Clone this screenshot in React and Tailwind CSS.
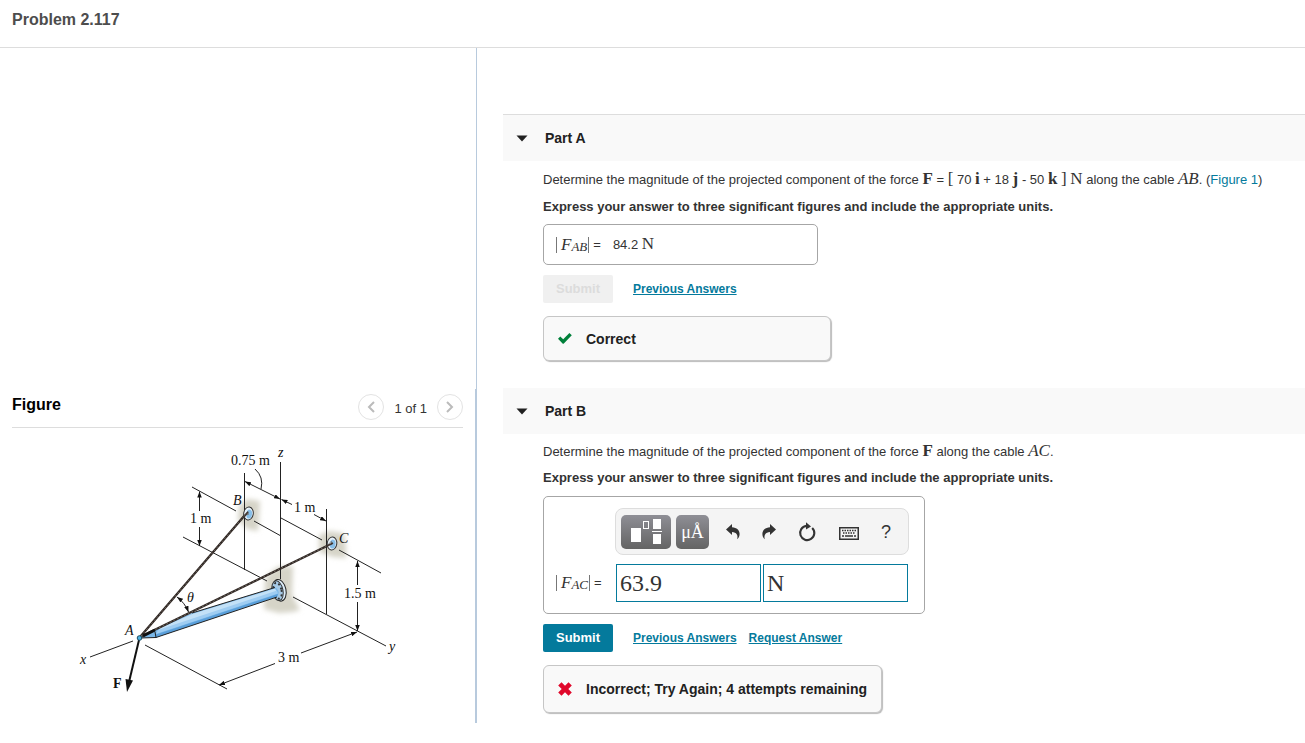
import React, { useState } from 'react';

const CaretIcon = () => (
  <svg width="12" height="7" viewBox="0 0 12 7" aria-hidden="true">
    <path d="M0.5 0.5h11L6 6.5z" fill="#212121" />
  </svg>
);

const CheckIcon = () => (
  <svg width="14" height="11" viewBox="0 0 14 11" aria-hidden="true">
    <path d="M0 5.8 2.3 3.500 5.200 6.300 11.400 0 13.800 2.200 5.600 10.800 4.800 10.800z" fill="#00803a" />
  </svg>
);

const CrossIcon = () => (
  <svg width="14" height="14" viewBox="0 0 14 14" aria-hidden="true">
    <path d="M3.500 0.200 7 3.700l3.500-3.500 3.300 3.300L10.300 7l3.500 3.500-3.300 3.300L7 10.300l-3.500 3.500-3.300-3.300L3.700 7 0.200 3.500z" fill="#e0082b" />
  </svg>
);

const UndoIcon = () => (
  <svg width="14" height="16" viewBox="0 0 14 16" aria-hidden="true">
    <path d="M0 5.5 6 0v3.2c4.800.3 7.600 3 7.600 6.800 0 2.200-.9 4-2.500 5.300 1.300-4-.6-7-5.100-7.200V11z" fill="#333" />
  </svg>
);

const RedoIcon = () => (
  <svg width="14" height="16" viewBox="0 0 14 16" aria-hidden="true">
    <path d="M14 5.5 8 0v3.2C3.200 3.500.4 6.200.4 10c0 2.200.9 4 2.500 5.300-1.300-4 .6-7 5.100-7.200V11z" fill="#333" />
  </svg>
);

const ResetIcon = () => (
  <svg width="18" height="20" viewBox="0 0 18 20" aria-hidden="true">
    <path d="M14.200 5.900A7.100 7.100 0 1 1 8.500 3.900" fill="none" stroke="#333" strokeWidth="2.100" />
    <path d="M8 0.300 13 4.500 8 7.600z" fill="#333" />
  </svg>
);

const KeyboardIcon = () => (
  <svg width="20" height="13" viewBox="0 0 20 13" aria-hidden="true">
    <rect x="0.75" y="0.75" width="18.500" height="11.500" fill="none" stroke="#333" strokeWidth="1.500" />
    <path d="M3 3.500h14M4 6h12" stroke="#333" strokeWidth="1.500" strokeDasharray="1.500 1" />
    <path d="M3 9h2M6 9h8M15 9h2" stroke="#333" strokeWidth="1.500" />
  </svg>
);

const TemplateIcon = () => (
  <svg width="31" height="27" viewBox="0 0 31 27" aria-hidden="true">
    <rect x="0" y="10" width="10" height="14" fill="#fff" />
    <rect x="12.500" y="3.500" width="5" height="7" fill="none" stroke="#fff" />
    <rect x="22" y="1" width="8" height="10" fill="#fff" />
    <rect x="21" y="13" width="10" height="1" fill="#fff" />
    <rect x="22" y="16" width="8" height="10" fill="#fff" />
  </svg>
);

const Var = ({ children }) => (
  <i className="font-['Liberation_Serif',serif] text-[17px] leading-none">{children}</i>
);

const Vec = ({ children }) => (
  <b className="font-['Liberation_Serif',serif] text-[17px] leading-none">{children}</b>
);

const Unit = ({ children }) => (
  <span className="font-['Liberation_Serif',serif] text-[17px] leading-none">{children}</span>
);

const ForceLabel = ({ sub }) => (
  <span className="flex items-center whitespace-nowrap font-['Liberation_Serif',serif] text-[17px] leading-5">
    <span className="mr-1 h-4 w-px bg-[#777]" />
    <i>F</i>
    <i className="pt-1 text-[13px]">{sub}</i>
    <span className="mr-1 ml-px h-4 w-px bg-[#777]" />
    <span className="font-['Liberation_Sans',sans-serif] text-[13px]">=</span>
  </span>
);

const PartHeader = ({ title, bordered }) => (
  <button
    type="button"
    className={`flex w-full items-center gap-[17px] bg-[#f9f9f9] pl-[13px] text-left text-sm font-bold text-[#212121] ${bordered ? 'h-[47px] border-t border-[#ddd]' : 'h-[46px]'}`}
  >
    <CaretIcon />
    {title}
  </button>
);

const Feedback = ({ icon, children, className }) => (
  <div
    className={`flex items-center rounded-md border border-[#c6c6c6] bg-[#f9f9f9] pl-[14px] text-sm font-bold text-[#212121] shadow-[1px_1px_1px_0px_#bbb] ${className}`}
  >
    <span className="w-7">{icon}</span>
    {children}
  </div>
);

const TextLink = ({ children }) => (
  <a href="#" className="text-xs font-bold text-[#047a9c] underline">{children}</a>
);

const Flange = ({ x, y }) => (
  <g transform={`translate(${x} ${y}) rotate(8)`}>
    <ellipse rx="4.800" ry="6.500" fill="#e8f2fa" stroke="#333" />
    <ellipse cx="0.800" cy="0.500" rx="2.800" ry="4.500" fill="#88bfe8" />
    <path d="M-4 2-1-2 0 1z" fill="#fff" stroke="#555" strokeWidth="0.700" />
  </g>
);

const Diagram = () => (
  <svg
    className="block w-full max-w-[340px]"
    viewBox="70 440 340 260"
    fontFamily="'Liberation Serif', serif"
    fontSize="14"
    fill="#111"
    role="img"
    aria-label="Boom supported by cables AB and AC"
  >
    <defs>
      <filter id="soft" x="-50%" y="-50%" width="200%" height="200%">
        <feGaussianBlur stdDeviation="2.500" />
      </filter>
      <marker id="tip" viewBox="0 0 8 6" refX="8" refY="3" markerWidth="6" markerHeight="4.500" orient="auto-start-reverse" markerUnits="userSpaceOnUse">
        <path d="M0 0 8 3 0 6z" fill="#111" />
      </marker>
    </defs>

    {/* Wall shading behind the fixings */}
    <g fill="#d6d4c8" filter="url(#soft)">
      <path d="M239 506 247 499 260 501 259 518 258 531 247 529 238 520z" />
      <path d="M319 535 329 531 343 533 346 546 346 558 333 557 319 552z" />
      <path d="M265 578 277 567 293 566 292 595 300 610 292 612 279 613 264 609z" />
    </g>

    {/* Axes and construction lines */}
    <g stroke="#222" strokeWidth="1" fill="none">
      <path d="M192 487 236 511M254 521 281 536M183 537 267 581" />
      <path d="M244.500 473V570M280.500 462V579M326.500 509V614" />
      <path d="M281 518 322 540M339 550 381 573M293 597 386 646" />
      <path d="M145 645 227 689M90 657 133 641" />
      <path d="M255 469Q264 477 261 489" />
    </g>

    {/* Dimension lines */}
    <g stroke="#222" strokeWidth="1" fill="none">
      <path d="M199.500 511V491.500" markerEnd="url(#tip)" />
      <path d="M199.500 527V546" markerEnd="url(#tip)" />
      <path d="M245 481.500 280 499" markerStart="url(#tip)" markerEnd="url(#tip)" />
      <path d="M292 504.500 281.500 499.500" markerEnd="url(#tip)" />
      <path d="M314 514.500 326 521" markerEnd="url(#tip)" />
      <path d="M357.500 585V561" markerEnd="url(#tip)" />
      <path d="M357.500 602V631" markerEnd="url(#tip)" />
      <path d="M301 653 357 632" markerEnd="url(#tip)" />
      <path d="M275 663.500 219 685" markerEnd="url(#tip)" />
    </g>

    {/* Boom with its wall flange */}
    <g transform="rotate(-12 278.500 590.500)">
      <ellipse cx="279.500" cy="590.500" rx="6.500" ry="11" fill="#dcecf8" stroke="#222" />
      <ellipse cx="277.500" cy="590.500" rx="5.500" ry="10" fill="#a5c9e5" stroke="#333" />
      <ellipse cx="277.500" cy="590.500" rx="4" ry="8" fill="none" stroke="#333" strokeWidth="1.800" strokeDasharray="2 2.500" />
    </g>
    <path d="M140 638 156 629 192 613 275 587.500Q281 591 277 597L156 637.500z" fill="#79b7e8" />
    <path d="M160 628 192 614 275 588.500 277 592 158 632z" fill="#c3e1f7" />
    <path d="M158 630 277 590.500 278 593.500 156 634z" fill="#9fcdf2" />
    <path d="M156 637.500 277 596.500 278 594 156 634.500z" fill="#5a9fda" />
    <path d="M192 613 275 587.500M140 638 156 637.500 277 597M155 632 156 637.500" fill="none" stroke="#222" />

    {/* Cables */}
    <g fill="none">
      <path d="M140 637 245 515M140 637 331 544" stroke="#2f2723" strokeWidth="2.300" />
      <path d="M141 636 245 515M141 636.500 331 544" stroke="#8a7f78" strokeWidth="0.700" strokeDasharray="2 2" />
      <path d="M143 636 155 630" stroke="#111" strokeWidth="3" />
    </g>
    <Flange x={248.5} y={513.5} />
    <Flange x={332} y={543.5} />
    <path d="M244 517 248 512M327 546 333 543" stroke="#3f3530" strokeWidth="1.500" />

    <path d="M177 597Q185 603 188.500 612" fill="none" stroke="#222" markerStart="url(#tip)" markerEnd="url(#tip)" />

    {/* Force at A */}
    <path d="M139 640 129 682" stroke="#111" strokeWidth="2" />
    <path d="M127 692 125.500 679 133 680.500z" fill="#111" />
    <circle cx="139.500" cy="638" r="2.300" fill="#4db2e0" stroke="#1a4d66" />

    <text x="231" y="465">0.75 m</text>
    <text x="278" y="457" fontStyle="italic">z</text>
    <text x="190" y="523">1 m</text>
    <text x="294" y="512">1 m</text>
    <text x="344" y="598">1.5 m</text>
    <text x="278" y="662">3 m</text>
    <text x="233" y="505" fontStyle="italic">B</text>
    <text x="339" y="543" fontStyle="italic">C</text>
    <text x="125" y="635" fontStyle="italic">A</text>
    <text x="187" y="602" fontStyle="italic">θ</text>
    <text x="80" y="664" fontStyle="italic">x</text>
    <text x="389" y="651" fontStyle="italic">y</text>
    <text x="113" y="688" fontWeight="bold">F</text>
  </svg>
);

const pagerButton =
  'flex h-[26px] w-[26px] items-center justify-center rounded-full border border-[#e3e3e3] bg-white';

const FigurePanel = () => (
  <section className="min-h-[334px] border-r-2 border-[#b8cadd] pl-3 pr-3">
    <div className="flex h-[39px] items-start justify-between border-b border-[#ddd]">
      <h2 className="pt-[6px] text-base leading-5 font-bold text-black">Figure</h2>
      <div className="flex items-center gap-[10px] pt-[5px] text-[13px] text-[#333]">
        <button type="button" aria-label="Previous figure" className={pagerButton}>
          <svg width="8" height="12" viewBox="0 0 8 12"><path d="M7 1 2 6l5 5" fill="none" stroke="#bbb" strokeWidth="2" /></svg>
        </button>
        <span className="pt-1">1 of 1</span>
        <button type="button" aria-label="Next figure" className={pagerButton}>
          <svg width="8" height="12" viewBox="0 0 8 12"><path d="m1 1 5 5-5 5" fill="none" stroke="#bbb" strokeWidth="2" /></svg>
        </button>
      </div>
    </div>
    <div className="pl-[58px] pt-3">
      <Diagram />
    </div>
  </section>
);

const toolKey =
  'flex h-[34px] items-center justify-center rounded-[5px] bg-linear-to-b from-[#8f8f96] to-[#646464]';
const answerInput =
  "h-[38px] w-[145px] border border-[#047a9c] bg-white px-[3px] font-['Liberation_Serif',serif] text-2xl text-[#333]";

const AnswerEditor = () => {
  const [value, setValue] = useState('63.9');
  const [units, setUnits] = useState('N');

  return (
    <div className="mt-2 w-[382px] rounded-[5px] border border-[#a6a6a6] pt-[11px] pr-[15px] pb-[11px] pl-3">
      <div className="ml-auto flex h-[47px] w-[294px] items-center rounded-lg border border-[#ddd] bg-[#f4f4f4] pr-[17px] pl-[5px]">
        <button type="button" aria-label="Templates" className={`${toolKey} w-[50px]`}>
          <TemplateIcon />
        </button>
        <button type="button" aria-label="Units" className={`${toolKey} ml-[5px] w-[33px] font-['Liberation_Serif',serif] text-lg text-white`}>
          μÅ
        </button>
        <div className="ml-[17px] flex flex-1 items-center justify-between">
          <button type="button" aria-label="Undo"><UndoIcon /></button>
          <button type="button" aria-label="Redo"><RedoIcon /></button>
          <button type="button" aria-label="Reset"><ResetIcon /></button>
          <button type="button" aria-label="Keyboard" className="pt-1"><KeyboardIcon /></button>
          <button type="button" aria-label="Help" className="text-lg text-[#333]">?</button>
        </div>
      </div>
      <div className="mt-[9px] flex items-center justify-between pr-px">
        <label htmlFor="fac-value"><ForceLabel sub="AC" /></label>
        <div className="flex gap-[2px]">
          <input id="fac-value" className={answerInput} value={value} onChange={e => setValue(e.target.value)} />
          <input aria-label="Units" className={answerInput} value={units} onChange={e => setUnits(e.target.value)} />
        </div>
      </div>
    </div>
  );
};

const App = () => (
  <div className="bg-white pb-5 font-['Liberation_Sans',Arial,sans-serif] text-[13px] text-[#333]">
    <header className="h-12 border-b border-[#ddd] px-3 pt-[10px]">
      <h1 className="text-base leading-5 font-bold text-[#4d4d4d]">Problem 2.117</h1>
    </header>
    <main className="grid grid-cols-[477fr_828fr]">
      <div className="flex flex-col">
        <div className="min-h-[341px] border-r border-[#b8cadd]" />
        <FigurePanel />
      </div>

      <div className="pt-[66px] pl-[26px]">
        <section>
          <PartHeader title="Part A" bordered />
          <div className="pl-10">
            <p className="pt-[9px] leading-5">
              Determine the magnitude of the projected component of the force <Vec>F</Vec> = <Unit>[</Unit> 70 <Vec>i</Vec> + 18 <Vec>j</Vec> - 50 <Vec>k</Vec> <Unit>]</Unit> <Unit>N</Unit> along the cable <Var>AB</Var>. (<a href="#" className="text-[#047a9c]">Figure 1</a>)
            </p>
            <p className="pt-[7px] leading-5 font-bold">
              Express your answer to three significant figures and include the appropriate units.
            </p>
            <div className="mt-[7px] flex h-[41px] w-[275px] items-center gap-3 rounded-[5px] border border-[#a6a6a6] pl-3">
              <ForceLabel sub="AB" />
              <span>84.2 <Unit>N</Unit></span>
            </div>
            <div className="mt-[10px] flex items-center gap-5">
              <button type="button" disabled className="h-7 w-[70px] rounded-xs bg-[#f0f0f0] text-[13px] font-bold text-[#dcdcdc]">Submit</button>
              <TextLink>Previous Answers</TextLink>
            </div>
            <Feedback icon={<CheckIcon />} className="mt-[13px] h-[45px] w-[288px]">Correct</Feedback>
          </div>
        </section>

        <section className="mt-[27px]">
          <PartHeader title="Part B" />
          <div className="pl-10">
            <p className="pt-2 leading-5">
              Determine the magnitude of the projected component of the force <Vec>F</Vec> along the cable <Var>AC</Var>.
            </p>
            <p className="pt-[6px] leading-5 font-bold">
              Express your answer to three significant figures and include the appropriate units.
            </p>
            <AnswerEditor />
            <div className="mt-[10px] flex items-center">
              <button type="button" className="mr-5 h-7 w-[70px] rounded-xs bg-[#047a9c] text-[13px] font-bold text-white">Submit</button>
              <div className="flex gap-3">
                <TextLink>Previous Answers</TextLink>
                <TextLink>Request Answer</TextLink>
              </div>
            </div>
            <Feedback icon={<CrossIcon />} className="mt-[13px] h-12 w-[339px]">
              Incorrect; Try Again; 4 attempts remaining
            </Feedback>
          </div>
        </section>
      </div>
    </main>
  </div>
);

export default App;
